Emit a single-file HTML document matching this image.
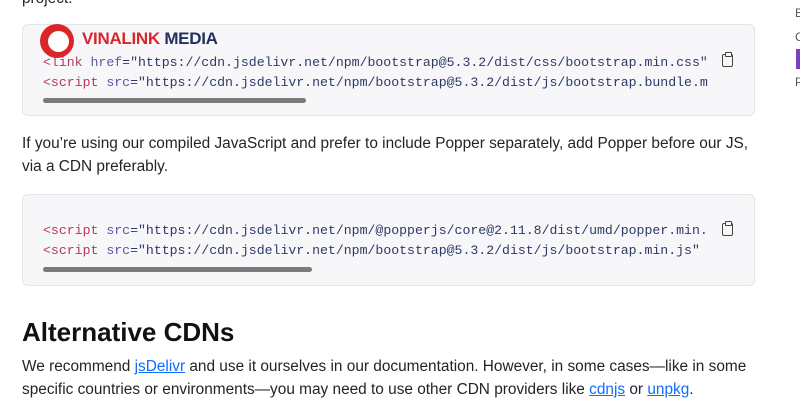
<!DOCTYPE html>
<html><head><meta charset="utf-8"><style>
body{margin:0;width:800px;height:400px;overflow:hidden;background:#fff;font-family:"Liberation Sans",sans-serif;color:#212529;position:relative}
.p{position:absolute;left:22px;font-size:15.4px;line-height:24px;white-space:nowrap}
.box{position:absolute;left:22px;width:733px;height:92px;background:#f7f7f9;border:1px solid #e6e6ea;border-radius:6px;box-sizing:border-box}
.code{position:absolute;left:20px;font-family:"Liberation Mono",monospace;font-size:13.2px;line-height:19.5px;white-space:pre;color:#2e3a66;width:665px;overflow:hidden}
.t{color:#b73a5e}.a{color:#5559a6}
.bar{position:absolute;left:20px;height:5px;border-radius:3px;background:#7a7a7a}
.clip{position:absolute;left:699px;width:11px;height:13px;border:1.4px solid #444;border-radius:2px;box-sizing:border-box}
.clip:before{content:"";position:absolute;left:2px;top:-3px;width:5px;height:3px;border:1.4px solid #444;background:#f7f7f9;border-radius:1px}
a{color:#0d6efd}
</style></head><body>
<div class="p" style="top:-13px;">project.</div>
<div class="box" style="top:24px">
 <div class="code" style="top:28px"><span class="t">&lt;link</span> <span class="a">href</span>="https://cdn.jsdelivr.net/npm/bootstrap@5.3.2/dist/css/bootstrap.min.css"
<span class="t">&lt;script</span> <span class="a">src</span>="https://cdn.jsdelivr.net/npm/bootstrap@5.3.2/dist/js/bootstrap.bundle.min.js"</div>
 <div class="bar" style="top:73px;width:263px"></div>
 <div class="clip" style="top:29px"></div>
</div>
<div style="position:absolute;left:40px;top:24px;width:34px;height:34px;border-radius:50%;background:#d9262b"></div>
<div style="position:absolute;left:48px;top:31px;width:21px;height:21px;border-radius:50%;background:#fff"></div>
<div style="position:absolute;left:82px;top:29px;font-weight:bold;font-size:17px;color:#d9262b;letter-spacing:-0.3px">VINALINK <span style="color:#23305f">MEDIA</span></div>
<div class="p" style="top:132px">If you’re using our compiled JavaScript and prefer to include Popper separately, add Popper before our JS,</div>
<div class="p" style="top:155px">via a CDN preferably.</div>
<div class="box" style="top:194px">
 <div class="code" style="top:26px"><span class="t">&lt;script</span> <span class="a">src</span>="https://cdn.jsdelivr.net/npm/@popperjs/core@2.11.8/dist/umd/popper.min.js"
<span class="t">&lt;script</span> <span class="a">src</span>="https://cdn.jsdelivr.net/npm/bootstrap@5.3.2/dist/js/bootstrap.min.js"</div>
 <div class="bar" style="top:72px;width:269px"></div>
 <div class="clip" style="top:28px"></div>
</div>
<div class="p" style="top:315px;font-size:26px;line-height:34px;font-weight:bold;color:#111">Alternative CDNs</div>
<div class="p" style="top:355px">We recommend <a href="#">jsDelivr</a> and use it ourselves in our documentation. However, in some cases—like in some</div>
<div class="p" style="top:378px">specific countries or environments—you may need to use other CDN providers like <a href="#">cdnjs</a> or <a href="#">unpkg</a>.</div>
<div style="position:absolute;left:795px;top:6px;font-size:12px;color:#555">B</div>
<div style="position:absolute;left:795px;top:30px;font-size:12px;color:#555">C</div>
<div style="position:absolute;left:796px;top:49px;width:4px;height:20px;background:#7a3fc2"></div>
<div style="position:absolute;left:795px;top:75px;font-size:12px;color:#555">P</div>
</body></html>
